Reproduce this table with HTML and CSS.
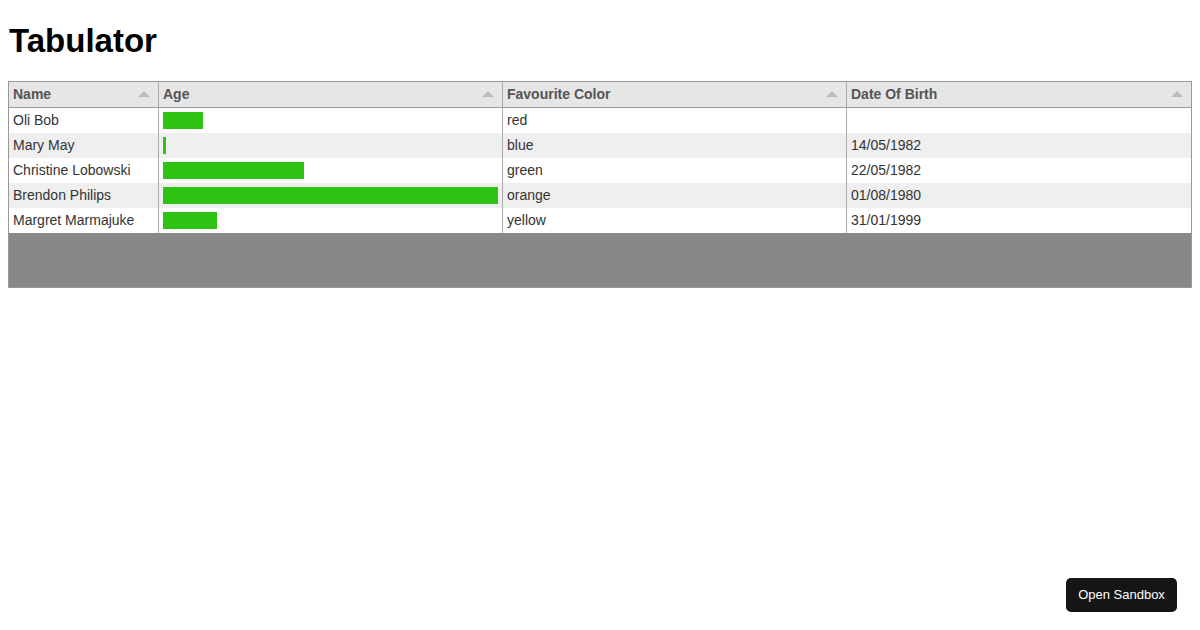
FILE: index.html
```html
<!DOCTYPE html>
<html>
<head>
<meta charset="utf-8">
<title>Tabulator</title>
<link rel="stylesheet" href="styles.css">
</head>
<body>
<h1 class="title">Tabulator</h1>
<div class="tabulator">
  <div class="tab-header">
    <div class="col col-name"><span class="col-title">Name</span><span class="arrow"></span></div>
    <div class="col col-age"><span class="col-title">Age</span><span class="arrow"></span></div>
    <div class="col col-color"><span class="col-title">Favourite Color</span><span class="arrow"></span></div>
    <div class="col col-dob"><span class="col-title">Date Of Birth</span><span class="arrow"></span></div>
  </div>
  <div class="tab-holder">
    <div class="row">
      <div class="cell col-name">Oli Bob</div>
      <div class="cell col-age"><div class="bar" style="width:12%"></div></div>
      <div class="cell col-color">red</div>
      <div class="cell col-dob"></div>
    </div>
    <div class="row row-even">
      <div class="cell col-name">Mary May</div>
      <div class="cell col-age"><div class="bar" style="width:1%"></div></div>
      <div class="cell col-color">blue</div>
      <div class="cell col-dob">14/05/1982</div>
    </div>
    <div class="row">
      <div class="cell col-name">Christine Lobowski</div>
      <div class="cell col-age"><div class="bar" style="width:42%"></div></div>
      <div class="cell col-color">green</div>
      <div class="cell col-dob">22/05/1982</div>
    </div>
    <div class="row row-even">
      <div class="cell col-name">Brendon Philips</div>
      <div class="cell col-age"><div class="bar" style="width:100%"></div></div>
      <div class="cell col-color">orange</div>
      <div class="cell col-dob">01/08/1980</div>
    </div>
    <div class="row">
      <div class="cell col-name">Margret Marmajuke</div>
      <div class="cell col-age"><div class="bar" style="width:16%"></div></div>
      <div class="cell col-color">yellow</div>
      <div class="cell col-dob">31/01/1999</div>
    </div>
  </div>
</div>
<a class="sandbox-btn" href="#">Open Sandbox</a>
</body>
</html>
```

FILE: styles.css
```css
html, body {
  margin: 0;
  padding: 0;
}
body {
  padding: 8px;
  font-family: "Liberation Sans", Arial, sans-serif;
  background: #fff;
}
.title {
  margin: 14px 1px 21px 1px;
  font-size: 33px;
  font-weight: bold;
  line-height: 38px;
  color: #000;
}
.tabulator {
  width: 1184px;
  box-sizing: border-box;
  border: 1px solid #999;
  background: #888;
  font-size: 14px;
}
.tab-header {
  display: flex;
  background: #e6e6e6;
  border-bottom: 1px solid #999;
  color: #555;
  font-weight: bold;
}
.col {
  position: relative;
  box-sizing: border-box;
  padding: 4px 25px 4px 4px;
  line-height: 17px;
  border-right: 1px solid #aaa;
  white-space: nowrap;
}
.col:last-child {
  border-right: none;
}
.arrow {
  position: absolute;
  top: 9px;
  right: 8px;
  width: 0;
  height: 0;
  border-left: 6px solid transparent;
  border-right: 6px solid transparent;
  border-bottom: 6px solid #bbb;
}
.col-name { width: 150px; }
.col-age { width: 344px; }
.col-color { width: 344px; }
.col-dob { width: 344px; }
.tab-holder {
  height: 179px;
}
.row {
  display: flex;
  background: #fff;
  color: #333;
}
.row-even {
  background: #efefef;
}
.cell {
  box-sizing: border-box;
  padding: 4px;
  height: 25px;
  line-height: 17px;
  border-right: 1px solid #aaa;
  white-space: nowrap;
  overflow: hidden;
}
.cell.col-dob {
  width: 343px;
  border-right: none;
}
.bar {
  height: 17px;
  background: #2dc214;
}
.sandbox-btn {
  position: fixed;
  right: 23px;
  bottom: 18px;
  display: block;
  width: 111px;
  height: 34px;
  box-sizing: border-box;
  line-height: 34px;
  text-align: center;
  background: #151515;
  color: #fff;
  font-family: "Liberation Sans", Arial, sans-serif;
  font-size: 13px;
  text-decoration: none;
  border-radius: 5px;
}
```
